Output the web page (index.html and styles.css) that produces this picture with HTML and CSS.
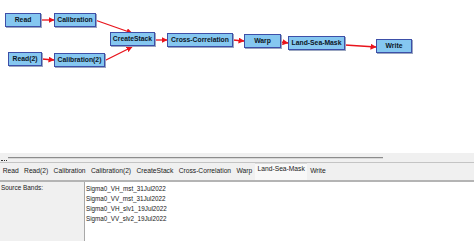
FILE: index.html
```html
<!DOCTYPE html>
<html lang="en">
<head>
    <meta charset="UTF-8">
    <title>Graph Builder</title>
    <link rel="stylesheet" href="styles.css">
</head>
<body>
    <div class="graph">
        <svg class="edges" width="474" height="153">
            <defs>
                <marker id="head" markerWidth="6" markerHeight="6" refX="5.5" refY="3" orient="auto" markerUnits="userSpaceOnUse">
                    <path d="M0,0 L6,3 L0,6 Z" fill="#e8141c"/>
                </marker>
            </defs>
            <g stroke="#e8141c" stroke-width="1.3" marker-end="url(#head)">
                <line x1="41" y1="20" x2="54" y2="20"/>
                <line x1="42" y1="59" x2="54" y2="60"/>
                <line x1="95" y1="20" x2="132" y2="33"/>
                <line x1="104" y1="61" x2="132" y2="47"/>
                <line x1="155" y1="40" x2="167" y2="40"/>
                <line x1="233" y1="40" x2="244" y2="41"/>
                <line x1="281" y1="42" x2="288" y2="43"/>
                <line x1="345" y1="45" x2="376" y2="47"/>
            </g>
        </svg>
        <div class="node" style="left:5px;top:13px;width:36px">Read</div>
        <div class="node" style="left:54px;top:13px;width:42px">Calibration</div>
        <div class="node" style="left:8px;top:52px;width:34px">Read(2)</div>
        <div class="node" style="left:54px;top:53px;width:51px">Calibration(2)</div>
        <div class="node" style="left:110px;top:32px;width:45px">CreateStack</div>
        <div class="node" style="left:167px;top:33px;width:66px">Cross-Correlation</div>
        <div class="node" style="left:244px;top:34px;width:37px">Warp</div>
        <div class="node" style="left:288px;top:36px;width:57px">Land-Sea-Mask</div>
        <div class="node" style="left:376px;top:39px;width:36px">Write</div>
    </div>

    <div class="panel">
        <div class="scroller">
            <div class="grip"></div>
            <div class="track"></div>
        </div>
        <div class="tabs">
            <span class="tab">Read</span>
            <span class="tab">Read(2)</span>
            <span class="tab">Calibration</span>
            <span class="tab">Calibration(2)</span>
            <span class="tab">CreateStack</span>
            <span class="tab">Cross-Correlation</span>
            <span class="tab">Warp</span>
            <span class="tab active">Land-Sea-Mask</span>
            <span class="tab">Write</span>
        </div>
        <div class="content">
            <div class="label">Source Bands:</div>
            <ul class="bands">
                <li>Sigma0_VH_mst_31Jul2022</li>
                <li>Sigma0_VV_mst_31Jul2022</li>
                <li>Sigma0_VH_slv1_19Jul2022</li>
                <li>Sigma0_VV_slv2_19Jul2022</li>
            </ul>
        </div>
    </div>
</body>
</html>
```

FILE: styles.css
```css
body {
    margin: 0;
    width: 474px;
    height: 241px;
    overflow: hidden;
    background-color: white;
    font-family: "Liberation Sans", Arial, sans-serif;
}

.graph {
    position: relative;
    height: 153px;
    background-color: white;
}

.edges {
    position: absolute;
    left: 0;
    top: 0;
}

.node {
    position: absolute;
    height: 14px;
    box-sizing: border-box;
    background-color: #85c7f0;
    border: 1px solid #3d4fa8;
    box-shadow: 1px 1px 0 #9aa6c0;
    color: #0b1626;
    font-size: 6.8px;
    font-weight: bold;
    line-height: 12px;
    text-align: center;
    white-space: nowrap;
}

.panel {
    height: 88px;
    display: flex;
    flex-direction: column;
    background-color: #f0f0f0;
}

.scroller {
    height: 10px;
    display: flex;
    align-items: flex-start;
    border-bottom: 1px solid #c4c4c4;
    box-sizing: border-box;
}

.grip {
    width: 6px;
    height: 2px;
    margin-top: 7px;
    margin-left: 1px;
    border-top: 1px dotted #303030;
}

.track {
    width: 375px;
    height: 1px;
    margin-top: 4px;
    margin-left: 1px;
    background-color: #8c8c8c;
    border-bottom: 1px solid #d8d8d8;
}

.tabs {
    height: 19px;
    display: flex;
    align-items: flex-end;
    border-bottom: 2px solid #b4b4b4;
    box-sizing: border-box;
    font-size: 6.7px;
    color: #202020;
}

.tab {
    padding: 0 2.7px 4px;
    line-height: 10px;
}

.tab.active {
    background-color: #f8f8f8;
    border-top: 1px solid #dcdcdc;
    padding-bottom: 6px;
}

.content {
    flex: 1;
    display: flex;
}

.label {
    width: 84px;
    padding: 2px 0 0 1px;
    box-sizing: border-box;
    font-size: 6.4px;
    color: #202020;
}

.bands {
    flex: 1;
    margin: 0;
    padding: 2px 0 0 1px;
    list-style: none;
    background-color: white;
    border-left: 1px solid #a8a8a8;
    font-size: 6.3px;
    line-height: 10px;
    color: #202020;
}
```
